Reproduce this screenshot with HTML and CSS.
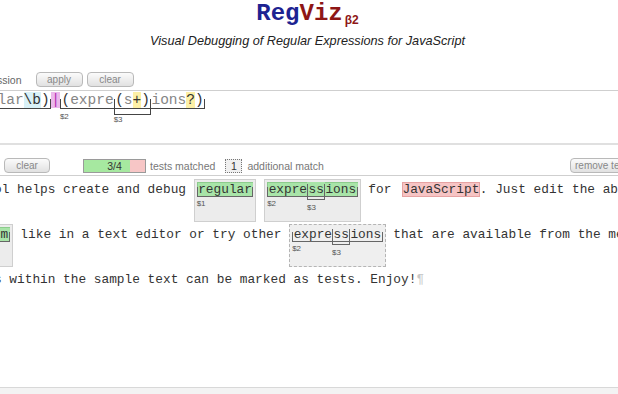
FILE: index.html
```html
<!DOCTYPE html>
<html>
<head>
<meta charset="utf-8">
<title>RegViz</title>
<link rel="stylesheet" href="styles.css">
</head>
<body>
<header class="head">
  <h1 class="title"><span class="reg">Reg</span><span class="viz">Viz</span><sub class="beta">β2</sub></h1>
  <p class="subtitle">Visual Debugging of Regular Expressions for JavaScript</p>
</header>

<div class="toolbar">
  <span class="label">ssion</span>
  <button class="btn apply">apply</button>
  <button class="btn clear1">clear</button>
</div>

<div class="regex"><span class="rg g1"><span class="lit">lar</span><span class="esc">\b</span><span class="meta">)</span></span><span class="alt">|</span><span class="rg"><i class="lbl">$2</i><span class="meta">(</span><span class="lit">expre</span><span class="rg d2"><i class="lbl">$3</i><span class="meta">(</span><span class="lit">s</span><span class="quant">+</span><span class="meta">)</span></span><span class="lit">ions</span><span class="quant">?</span><span class="meta">)</span></span></div>

<div class="tests">
  <button class="btn clear2">clear</button>
  <div class="bar"><div class="fills"><span class="pass"></span><span class="miss"></span></div><span class="ratio">3/4</span></div>
  <span class="matched">tests matched</span>
  <span class="count">1</span>
  <span class="addl">additional match</span>
  <button class="btn remove">remove test</button>
</div>

<div class="sample">
<div class="line cut">ol helps create and debug <span class="test"><span class="g ok"><i class="lbl">$1</i>regular</span></span> <span class="test"><span class="g ok"><i class="lbl">$2</i>expre<span class="g ok d2"><i class="lbl">$3</i>ss</span>ions</span></span> for <span class="fail">JavaScript</span>. Just edit the above regular expression</div>
<div class="line"><span class="test cutm"><span class="g ok">m</span></span> like in a text editor or try other <span class="test extra"><span class="g"><i class="lbl">$2</i>expre<span class="g d2"><i class="lbl">$3</i>ss</span>ions</span></span> that are available from the menu.</div>
<div class="line cut">s within the sample text can be marked as tests. Enjoy!<span class="pilcrow">¶</span></div>
</div>
<div class="foot"></div>
</body>
</html>
```

FILE: styles.css
```css
* { box-sizing: border-box; }
html, body { margin: 0; padding: 0; background: #fff; }
body {
  width: 618px;
  height: 394px;
  overflow: hidden;
  font-family: "Liberation Sans", Arial, sans-serif;
}

/* header */
.head {
  height: 70px;
  padding: 2px 3px 0 0;
  text-align: center;
}
.title {
  margin: 0;
  font: bold 24px/24px "Liberation Mono", "Courier New", monospace;
}
.reg { color: #1d2391; }
.viz { color: #8e1616; }
.beta {
  font: bold 12px/0 "Liberation Sans", Arial, sans-serif;
  vertical-align: -4px;
  color: #8e1616;
  margin-left: 2px;
}
.subtitle {
  margin: 7px 0 0;
  font: italic 12.7px/16px "Liberation Sans", Arial, sans-serif;
  color: #222;
}

/* buttons */
.btn {
  flex-shrink: 0;
  height: 15px;
  width: 47px;
  padding: 0;
  border: 1px solid #b9b9b9;
  border-radius: 4px;
  background: linear-gradient(#fbfbfb, #e1e1e1);
  color: #888;
  font: 10px/13px "Liberation Sans", Arial, sans-serif;
}

/* regex toolbar */
.toolbar {
  display: flex;
  align-items: center;
  height: 15px;
  margin: 2px 0 3px;
  white-space: nowrap;
}
.label {
  font-size: 10.5px;
  color: #666;
  margin-left: -3px;
}
.apply { margin-left: 14px; }
.clear1 { margin-left: 4px; }

/* regex line */
.regex {
  height: 55px;
  padding-top: 1px;
  border-top: 1px solid #cfcfcf;
  border-bottom: 2px solid #e0e0e0;
  font: 14.5px/17px "Liberation Mono", "Courier New", monospace;
  white-space: nowrap;
  overflow: hidden;
  color: #858585;
}
.lit { color: #858585; }
.meta { color: #333; }
.esc { color: #333; background: #d9f1f7; }
.alt { color: #b42fb4; background: #ebb8eb; }
.quant { color: #333; background: #fdf0a6; }
.rg {
  position: relative;
  display: inline-block;
  padding: 0 1.5px;
}
.rg::after {
  content: "";
  position: absolute;
  left: 0;
  right: 0;
  top: 7px;
  height: 9px;
  border: 1px solid #444;
  border-top: 0;
}
.rg.d2::after { height: 15px; }
.rg.g1 { margin-left: -2.5px; padding-left: 0; }
.rg.g1::after { left: -10px; }
.lbl {
  position: absolute;
  left: 0;
  font: normal 8px/8px "Liberation Sans", Arial, sans-serif;
  color: #555;
  font-style: normal;
}
.rg > .lbl { top: 21px; }
.rg.d2 > .lbl { top: 24px; }

/* tests row */
.tests {
  display: flex;
  align-items: center;
  height: 30px;
  padding-top: 11px;
  font-size: 10.5px;
  color: #777;
  white-space: nowrap;
}
.tests > * { flex-shrink: 0; }
.clear2 { margin-left: 4px; width: 46px; }
.bar {
  display: grid;
  width: 63px;
  height: 14px;
  margin-left: 33px;
  border: 1px solid #9a9a9a;
}
.bar > * { grid-area: 1 / 1; }
.fills { display: flex; }
.pass { width: 46px; background: #a6e8a0; }
.miss { flex: 1; background: #f7c6c6; }
.ratio {
  text-align: center;
  color: #333;
  font-size: 10.5px;
  line-height: 12px;
}
.matched { margin-left: 4px; }
.count {
  width: 17px;
  height: 14px;
  margin-left: 10px;
  border: 1px dotted #777;
  background: #f0f0f0;
  text-align: center;
  line-height: 12px;
  color: #333;
}
.addl { margin-left: 5px; }
.remove {
  margin-left: auto;
  margin-right: -12px;
  width: 60px;
  text-align: left;
  padding-left: 4px;
}

/* sample text */
.sample {
  height: 213px;
  border-top: 1px solid #cfcfcf;
  border-bottom: 1px solid #d8d8d8;
  padding-top: 3px;
  font: 12.8px/22px "Liberation Mono", "Courier New", monospace;
  color: #333;
  white-space: nowrap;
  overflow: hidden;
}
.line.cut { margin-left: -6px; }
.test {
  display: inline-block;
  vertical-align: baseline;
  height: 43px;
  padding: 2px 2px 0;
  margin-bottom: 2px;
  border: 1px solid #cfcfcf;
  background: #ececec;
  line-height: 16px;
}
.test.cutm { margin-left: -4px; }
.test.extra {
  border: 1px dashed #b5b5b5;
  background: #efefef;
}
.g {
  position: relative;
  display: inline-block;
  padding: 0 1.5px;
  line-height: 15px;
}
.g::after {
  content: "";
  position: absolute;
  left: 0;
  right: 0;
  top: 5px;
  bottom: 0;
  border: 1px solid #666;
  border-top: 0;
}
.g.d2::after { top: 2px; bottom: -3px; }
.g > .lbl { top: 18px; }
.g.d2 > .lbl { top: 22px; }
.ok {
  background: #a8e4a8;
  box-shadow: inset 1px 1px 0 #8ccc8c;
}
.g.ok.d2 { box-shadow: none; }
.fail {
  margin-left: 3px;
  padding: 0 0.5px;
  background: #f6c4c4;
  box-shadow: inset 0 0 0 1px #e6a2a2;
}
.pilcrow { color: #c8c8c8; }

.foot {
  height: 10px;
  background: #f3f3f3;
}
```
